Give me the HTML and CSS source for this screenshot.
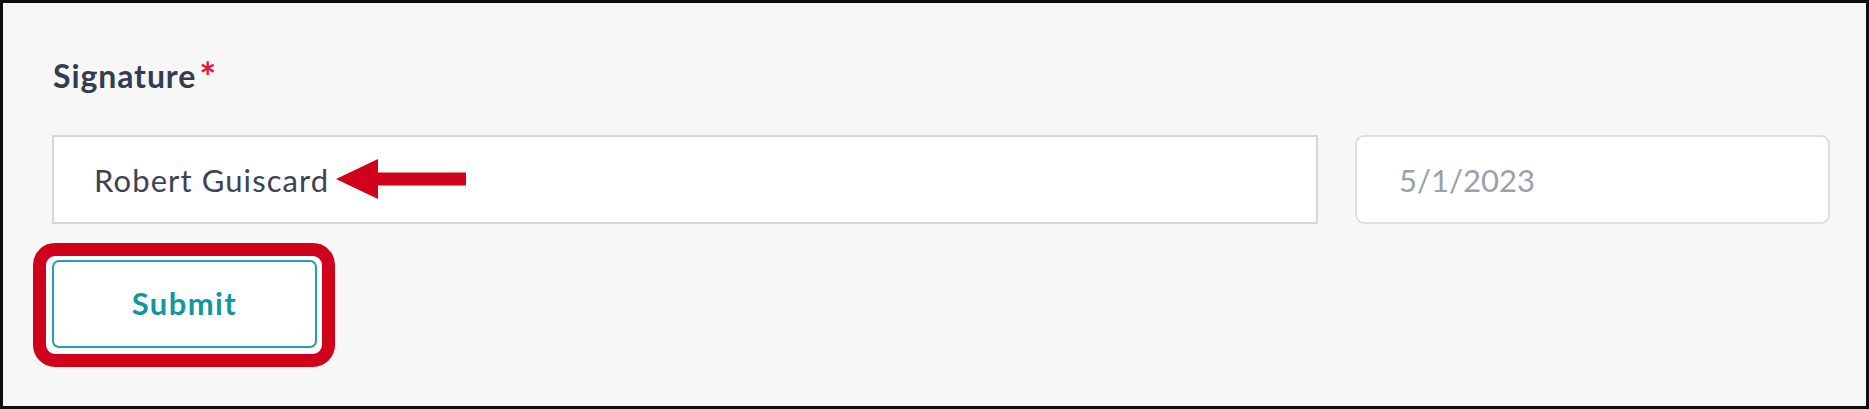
FILE: index.html
```html
<!DOCTYPE html>
<html lang="en">
<head>
<meta charset="utf-8">
<title>Signature</title>
<link rel="stylesheet" href="styles.css">
</head>
<body>
<div class="panel">
  <div class="label">Signature<span class="req">*</span></div>
  <div class="row">
    <div class="field name">
      <span class="value">Robert Guiscard</span>
      <svg class="arrow" width="130" height="40" viewBox="0 0 130 40" aria-hidden="true"><polygon points="0,20 42,0 42,13.5 130,13.5 130,26.5 42,26.5 42,40" fill="#d0021b"/></svg>
    </div>
    <div class="field date"><span class="date-value">5/1/2023</span></div>
  </div>
  <div class="highlight">
    <button class="submit" type="button">Submit</button>
  </div>
</div>
</body>
</html>
```
FILE: styles.css
```css
html, body {
  margin: 0;
  padding: 0;
  background: #ffffff;
}
.panel {
  box-sizing: border-box;
  width: 1869px;
  height: 409px;
  border: 3px solid #0d0d0d;
  background: #f7f7f7;
  padding: 54px 36px 0 49px;
  font-family: "Lato", "Liberation Sans", sans-serif;
}
.label {
  height: 38px;
  font-size: 32px;
  line-height: 38px;
  font-weight: 700;
  color: #343d4f;
  margin-left: 1px;
  letter-spacing: 0.9px;
}
.req {
  color: #e5153d;
  margin-left: 3px;
  font-size: 40px;
  line-height: 40px;
  vertical-align: top;
}
.row {
  display: flex;
  gap: 37px;
  margin-top: 40px;
}
.field {
  box-sizing: border-box;
  height: 89px;
  background: #ffffff;
  display: flex;
  align-items: center;
}
.name {
  flex: 1;
  border: 2px solid #d4d7db;
  padding-left: 40px;
}
.value {
  font-size: 31px;
  color: #3b4354;
  letter-spacing: 1.1px;
}
.arrow {
  display: block;
  margin-left: 7px;
  margin-top: -2px;
}
.date {
  width: 475px;
  border: 2px solid #dcdfe3;
  border-radius: 9px;
  padding-left: 42px;
}
.date-value {
  font-size: 31px;
  color: #9ba1ab;
}
.highlight {
  display: inline-block;
  margin-top: 19px;
  margin-left: -19px;
  border: 13px solid #d0021b;
  border-radius: 22px;
  background: #ffffff;
  padding: 4px 5px 6px 6px;
}
.submit {
  display: block;
  box-sizing: border-box;
  width: 265px;
  height: 88px;
  background: #ffffff;
  border: 2px solid #1ea2ab;
  border-radius: 7px;
  color: #13979f;
  font-family: "Lato", "Liberation Sans", sans-serif;
  font-size: 31px;
  font-weight: 700;
  letter-spacing: 1.4px;
  padding: 0 0 3px 0;
  cursor: pointer;
}
```
